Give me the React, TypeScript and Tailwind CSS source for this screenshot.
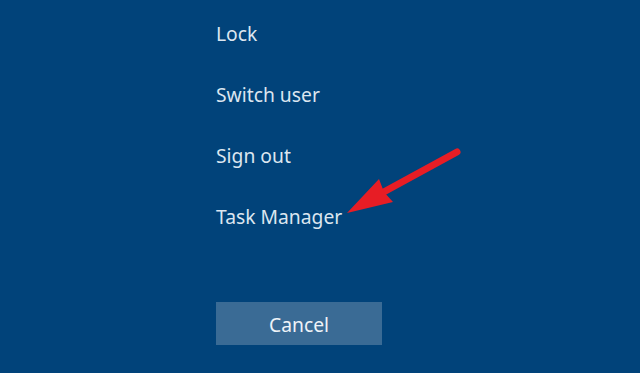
const items = ['Lock', 'Switch user', 'Sign out', 'Task Manager']

function Arrow() {
  return (
    <svg className="absolute left-0 top-0 pointer-events-none" width="640" height="373" viewBox="0 0 640 373">
      <line x1="457" y1="152" x2="380" y2="194" stroke="#e71d25" strokeWidth="7" strokeLinecap="round" />
      <path d="M347 213 L379 179 L384 192 L393 202 Z" fill="#e71d25" />
    </svg>
  )
}

export default function App() {
  return (
    <div
      className="relative w-[640px] h-[373px] overflow-hidden bg-[#01437a] text-[#dce6f0]"
      style={{ fontFamily: '"Noto Sans", "Open Sans", sans-serif' }}
    >
      <div className="pl-[216px] pt-[20px] flex flex-col">
        {items.map((t) => (
          <div key={t} className="h-[61px] text-[19.3px] leading-[28px]">
            {t}
          </div>
        ))}
        <button
          type="button"
          className="mt-[38px] w-[166px] h-[43px] pt-[4px] bg-[#3a6b95] text-[19.3px] text-[#eef3f8]"
        >
          Cancel
        </button>
      </div>
      <Arrow />
    </div>
  )
}
